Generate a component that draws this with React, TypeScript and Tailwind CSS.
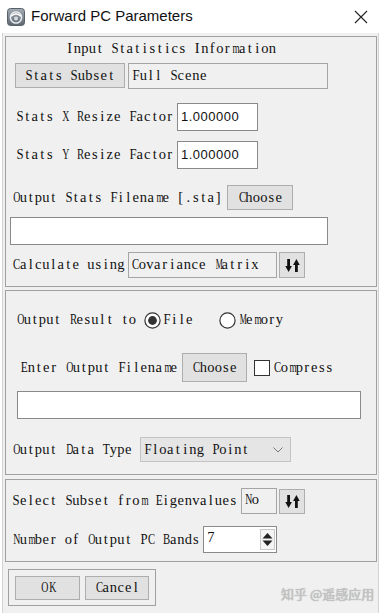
import React from "react";

const F = "font-['Liberation_Serif',serif] text-[14.5px] text-[#111] whitespace-nowrap";
const BTN = "border border-[#adadad] bg-[#e1e1e1] flex items-center justify-center";
const RO = "border border-[#a5a5a5] bg-[#f0f0f0] flex items-center";
const WH = "border border-[#8a8a8a] bg-white flex items-center";
const PANEL = "border border-[#a0a0a0] flex flex-col";

function scaleFor(c: string): string {
  if (c === "W") return "scale-x-[0.52]";
  if (c === "M") return "scale-x-[0.55]";
  if (c === "m") return "scale-x-[0.63]";
  if ("wNODXYAHUVKGQ".includes(c)) return "scale-x-[0.68]";
  if ("CBR".includes(c)) return "scale-x-[0.74]";
  if ("ETLZ".includes(c)) return "scale-x-[0.8]";
  if ("PFS".includes(c)) return "scale-x-[0.88]";
  return "";
}

function T({ s, className = "" }: { s: string; className?: string }) {
  return (
    <span className={`${F} ${className}`}>
      {s.split("").map((c, i) => (
        <span key={i} className={`inline-block w-[7.5px] text-center ${scaleFor(c)}`}>
          {c === " " ? "\u00a0" : c}
        </span>
      ))}
    </span>
  );
}

function TitleIcon() {
  return (
    <svg width="18" height="18" viewBox="0 0 18 18">
      <defs>
        <linearGradient id="tg" x1="0" y1="0" x2="0" y2="1">
          <stop offset="0" stopColor="#a3abb4" />
          <stop offset="1" stopColor="#5e6771" />
        </linearGradient>
      </defs>
      <rect x="0.5" y="0.5" width="17" height="17" rx="3" fill="url(#tg)" stroke="#58616b" />
      <circle cx="9" cy="9.5" r="5.6" fill="none" stroke="#e9edf0" strokeWidth="1.5" />
      <path d="M4.2 8.2 Q9 3.8 13.8 8.2" stroke="#ffffff" fill="none" strokeWidth="1.3" />
      <circle cx="9" cy="10.5" r="2" fill="#d7dce0" />
    </svg>
  );
}

function CloseX() {
  return (
    <svg width="14" height="14" viewBox="0 0 14 14">
      <path d="M1 1 L13 13 M13 1 L1 13" stroke="#222" strokeWidth="1.1" />
    </svg>
  );
}

function UpDown() {
  return (
    <svg width="15" height="15" viewBox="0 0 15 15">
      <rect x="2.2" y="1" width="2.8" height="8" fill="#111" />
      <polygon points="0.3,8 6.9,8 3.6,14" fill="#111" />
      <rect x="10" y="6" width="2.8" height="8" fill="#111" />
      <polygon points="8.1,7 14.7,7 11.4,1" fill="#111" />
    </svg>
  );
}

function Radio({ on }: { on: boolean }) {
  return (
    <svg width="17" height="17" viewBox="0 0 17 17">
      <circle cx="8.5" cy="8.5" r="7.6" fill="#fff" stroke="#333" strokeWidth="1.2" />
      {on && <circle cx="8.5" cy="8.5" r="4.4" fill="#333" />}
    </svg>
  );
}

const NUM = "font-['Liberation_Sans',sans-serif] text-[13px] tracking-[0.5px] text-[#111]";

export default function App() {
  return (
    <div className="w-[383px] h-[613px] bg-white overflow-hidden relative">
      {/* title bar */}
      <div className="h-[33px] flex items-center">
        <div className="ml-[7px] flex"><TitleIcon /></div>
        <span className="ml-[6px] font-['Liberation_Sans',sans-serif] text-[15px] text-[#111]">Forward PC Parameters</span>
        <div className="ml-auto mr-[15px] flex"><CloseX /></div>
      </div>

      {/* body */}
      <div className="ml-[2px] w-[377px] h-[580px] border-x border-[#d4d4d4] bg-[#f0f0f0] pl-[2px] pt-[3px] flex flex-col">
        {/* panel 1 */}
        <div className={`${PANEL} w-[372px] pb-[8px]`}>
          <div className="mt-[4px] h-[16px] pl-[60px] flex items-center">
            <T s="Input Statistics Information" />
          </div>
          <div className="mt-[6px] h-[26px] pl-[9px] flex items-start">
            <div className={`${BTN} w-[110px] h-[25px]`}><T s="Stats Subset" /></div>
            <div className={`${RO} ml-[3px] w-[200px] h-[26px] pl-[3px]`}><T s="Full Scene" /></div>
          </div>
          <div className="mt-[14px] h-[28px] pl-[10px] flex items-center">
            <T s="Stats X Resize Factor" className="w-[161px]" />
            <div className={`${WH} w-[81px] h-[28px] pl-[3px]`}><span className={NUM}>1.000000</span></div>
          </div>
          <div className="mt-[10px] h-[28px] pl-[10px] flex items-center">
            <T s="Stats Y Resize Factor" className="w-[161px]" />
            <div className={`${WH} w-[81px] h-[28px] pl-[3px]`}><span className={NUM}>1.000000</span></div>
          </div>
          <div className="mt-[16px] h-[25px] pl-[6px] flex items-center">
            <T s="Output Stats Filename [.sta]" className="w-[215px]" />
            <div className={`${BTN} w-[66px] h-[25px]`}><T s="Choose" /></div>
          </div>
          <div className={`${WH} mt-[7px] ml-[4px] w-[318px] h-[28px]`} />
          <div className="mt-[7px] h-[26px] pl-[6px] flex items-center">
            <T s="Calculate using" className="w-[116px]" />
            <div className={`${RO} w-[149px] h-[26px] pl-[2px]`}><T s="Covariance Matrix" /></div>
            <div className={`${BTN} ml-[2px] w-[26px] h-[26px]`}><UpDown /></div>
          </div>
        </div>

        {/* panel 2 */}
        <div className={`${PANEL} mt-[3px] w-[372px] pb-[12px]`}>
          <div className="mt-[21px] h-[16px] pl-[10px] flex items-center">
            <T s="Output Result to" className="w-[128px]" />
            <Radio on />
            <T s="File" className="ml-[2px] w-[56px]" />
            <Radio on={false} />
            <T s="Memory" className="ml-[2px]" />
          </div>
          <div className="mt-[25px] h-[29px] pl-[14px] flex items-center">
            <T s="Enter Output Filename" className="w-[162px]" />
            <div className={`${BTN} w-[65px] h-[29px]`}><T s="Choose" /></div>
            <div className="ml-[7px] w-[16px] h-[16px] border border-[#333] bg-white" />
            <T s="Compress" className="ml-[3px]" />
          </div>
          <div className={`${WH} mt-[9px] ml-[11px] w-[344px] h-[28px]`} />
          <div className="mt-[18px] h-[25px] pl-[6px] flex items-center">
            <T s="Output Data Type" className="w-[128px]" />
            <div className="w-[151px] h-[25px] border border-[#c4c4c4] bg-[#e5e5e5] flex items-center pl-[3px] pr-[7px]">
              <T s="Floating Point" />
              <svg className="ml-auto" width="10" height="6" viewBox="0 0 10 6">
                <path d="M0.5 0.5 L5 5 L9.5 0.5" stroke="#777" strokeWidth="1" fill="none" />
              </svg>
            </div>
          </div>
        </div>

        {/* panel 3 */}
        <div className={`${PANEL} mt-[4px] w-[372px] pb-[8px]`}>
          <div className="mt-[8px] h-[26px] pl-[6px] flex items-center">
            <T s="Select Subset from Eigenvalues" className="w-[229px]" />
            <div className={`${RO} w-[36px] h-[26px] pl-[2px] items-start`}><T s="No" className="text-[13px]" /></div>
            <div className={`${BTN} ml-[2px] w-[26px] h-[25px]`}><UpDown /></div>
          </div>
          <div className="mt-[12px] h-[27px] pl-[6px] flex items-center">
            <T s="Number of Output PC Bands" className="w-[191px]" />
            <div className={`${WH} w-[74px] h-[27px] pl-[3px] items-start`}>
              <T s="7" className="text-[13px]" />
              <div className="ml-auto mt-[2px] mr-[1px] w-[15px] h-[21px] border border-[#c8c8c8] bg-[#f4f4f4] flex items-center justify-center">
                <svg width="11" height="15" viewBox="0 0 11 15">
                  <polygon points="0.5,6.5 10.5,6.5 5.5,1" fill="#222" />
                  <polygon points="0.5,8.5 10.5,8.5 5.5,14" fill="#222" />
                </svg>
              </div>
            </div>
          </div>
        </div>

        {/* buttons */}
        <div className="mt-[7px] ml-[3px] w-[148px] h-[37px] border border-[#a0a0a0] pt-[6px] pl-[6px] flex items-start">
          <div className={`${BTN} w-[65px] h-[24px]`}><T s="OK" /></div>
          <div className={`${BTN} ml-[5px] w-[64px] h-[24px]`}><T s="Cancel" /></div>
        </div>
      </div>

      {/* watermark */}
      <div className="absolute left-[281px] top-[584px] font-['Noto_Sans_CJK_SC',sans-serif] text-[13px] text-[#c4c4c4] whitespace-nowrap [text-shadow:0_0_1px_#999]">
        知乎 @遥感应用
      </div>
    </div>
  );
}
